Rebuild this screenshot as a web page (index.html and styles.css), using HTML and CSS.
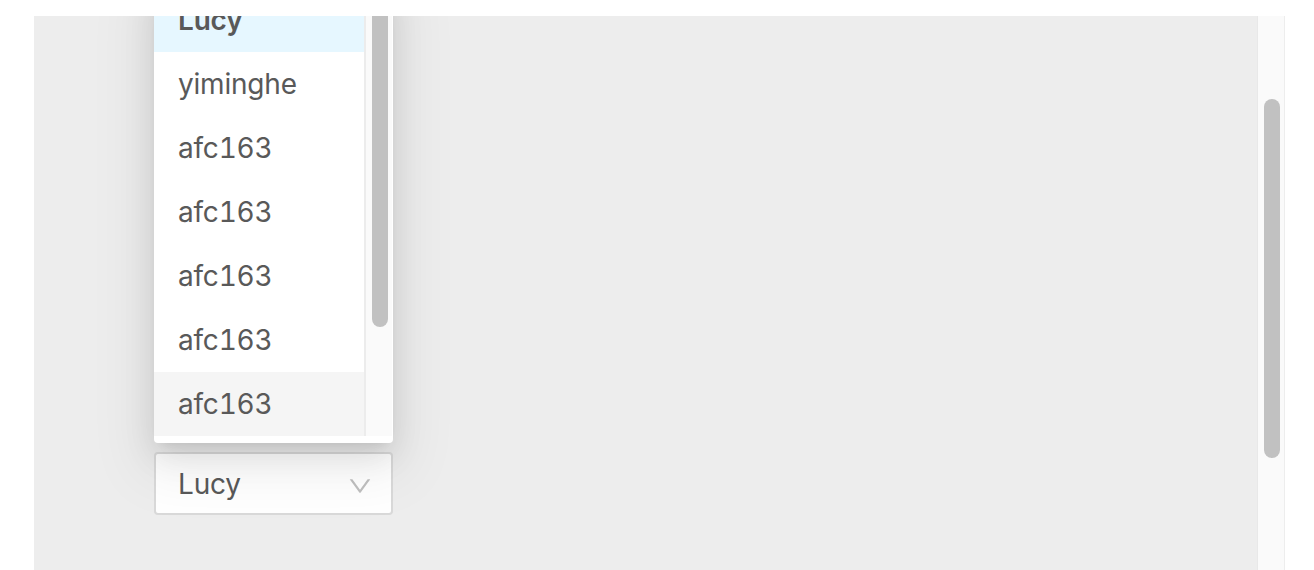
FILE: index.html
```html
<!DOCTYPE html>
<html lang="en">
<head>
<meta charset="utf-8">
<title>Select dropdown</title>
<link rel="stylesheet" href="styles.css">
</head>
<body>
<div class="frame">
  <div class="canvas">
    <div class="dropdown">
      <div class="list">
        <div class="option selected">Lucy</div>
        <div class="option">yiminghe</div>
        <div class="option">afc163</div>
        <div class="option">afc163</div>
        <div class="option">afc163</div>
        <div class="option">afc163</div>
        <div class="option active">afc163</div>
      </div>
      <div class="vtrack"><div class="vthumb"></div></div>
    </div>
    <div class="select">
      <span class="select-value">Lucy</span>
      <svg class="arrow" viewBox="64 64 896 896" width="24" height="24" aria-hidden="true"><path d="M884 256h-75c-5.1 0-9.9 2.5-12.9 7.1L512 654.3 227.9 263.1c-3-4.6-7.8-7.1-12.9-7.1h-75c-6.5 0-10.3 7.4-6.5 12.7l352.6 486.1c12.8 17.6 39 17.6 51.7 0l352.6-486.1c3.9-5.3.1-12.7-6.4-12.7z"/></svg>
    </div>
  </div>
  <div class="track"><div class="thumb"></div></div>
</div>
</body>
</html>
```

FILE: styles.css
```css
html, body {
  margin: 0;
  padding: 0;
  background: #ffffff;
}

body {
  font-family: Inter, "Liberation Sans", Arial, sans-serif;
  font-size: 28px;
  font-feature-settings: "tnum" 1;
  letter-spacing: -0.2px;
  color: #595959;
  overflow: hidden;
}

.frame {
  display: flex;
  margin: 16px 29px 0 34px;
  height: 554px;
  overflow: hidden;
}

.canvas {
  flex: 1;
  background: #ededed;
  padding-left: 120px;
  display: flex;
  flex-direction: column;
  align-items: flex-start;
  overflow: hidden;
}

.dropdown {
  position: relative;
  z-index: 1;
  margin-top: -36px;
  width: 239px;
  display: flex;
  background: #ffffff;
  border-radius: 4px;
  padding: 8px 0 7px;
  box-shadow: 0 6px 12px -8px rgba(0, 0, 0, 0.14),
              0 12px 32px 0 rgba(0, 0, 0, 0.1),
              0 18px 56px 16px rgba(0, 0, 0, 0.06);
}

.list {
  width: 210px;
  display: flex;
  flex-direction: column;
}

.option {
  height: 64px;
  line-height: 64px;
  padding: 0 24px;
  white-space: nowrap;
}

.option.selected {
  background: #e6f7ff;
  font-weight: 600;
}

.option.active {
  background: #f5f5f5;
}

.vtrack {
  border-left: 2px solid #ececec;
  background: #fafafa;
  box-sizing: border-box;
  flex: 0 0 28px;
  padding-left: 6px;
}

.vthumb {
  width: 16px;
  height: 339px;
  background: #c1c1c1;
  border-radius: 0 0 8px 8px;
}

.select {
  margin-top: 9px;
  width: 239px;
  height: 63px;
  box-sizing: border-box;
  border: 2px solid #d9d9d9;
  border-radius: 4px;
  background: #ffffff;
  display: flex;
  align-items: center;
  justify-content: space-between;
  padding: 0 19px 0 22px;
}

.arrow {
  fill: #bfbfbf;
  margin-top: 4px;
}

.track {
  width: 28px;
  box-sizing: border-box;
  background: #fafafa;
  border-left: 1px solid #e8e8e8;
  border-right: 1px solid #ededed;
  padding: 83px 0 0 6px;
}

.thumb {
  width: 16px;
  height: 359px;
  background: #c1c1c1;
  border-radius: 8px;
}
```
